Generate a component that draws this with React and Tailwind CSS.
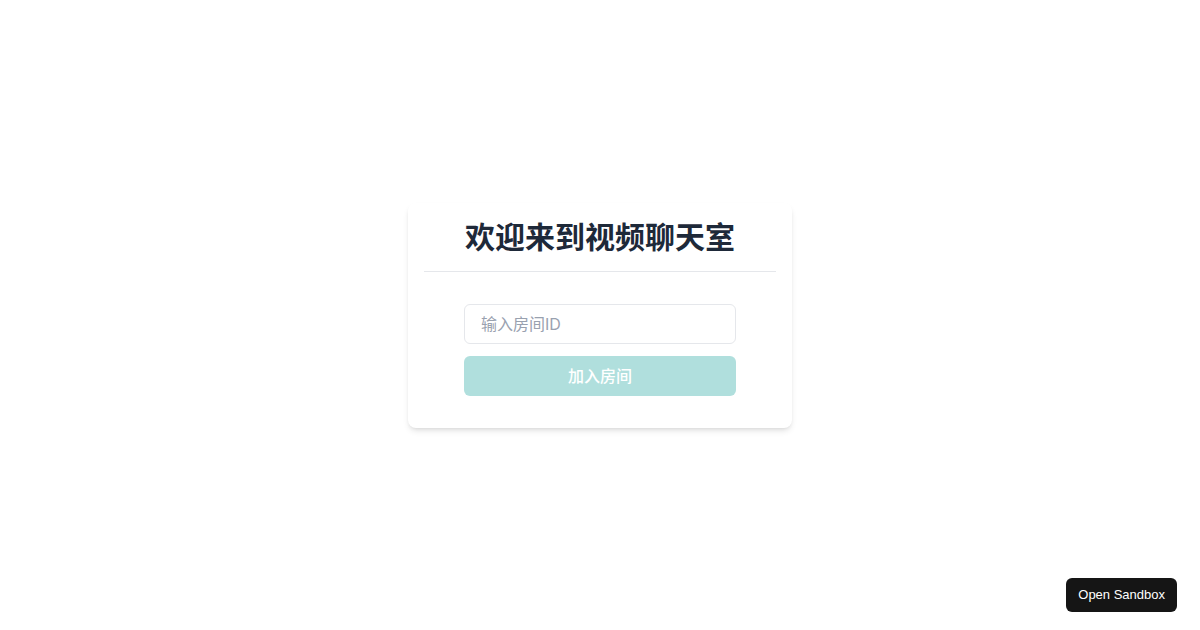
import { useState } from "react";

export default function App() {
  const [roomId, setRoomId] = useState("");

  return (
    <div className="min-h-screen bg-white flex items-center justify-center font-['Inter','Noto_Sans_CJK_SC',sans-serif]">
      <div className="w-full max-w-sm bg-white rounded-lg shadow-md px-4 pt-4">
        <h1 className="text-3xl font-bold text-gray-800 text-center pb-4 border-b border-gray-200">
          欢迎来到视频聊天室
        </h1>

        <div className="px-10 py-8 flex flex-col gap-3">
          <input
            type="text"
            value={roomId}
            onChange={(e) => setRoomId(e.target.value)}
            placeholder="输入房间ID"
            className="h-10 w-full border border-gray-200 rounded-md px-4 text-base text-gray-800 placeholder:text-gray-400 outline-none"
          />
          <button
            disabled={!roomId}
            className="h-10 w-full rounded-md bg-[#b0dfdd] text-white text-base font-medium"
          >
            加入房间
          </button>
        </div>
      </div>

      <button className="fixed right-[23px] bottom-[18px] h-[34px] px-3 rounded-md bg-[#151515] text-white text-[13px] font-['Liberation_Sans',Arial,sans-serif]">
        Open Sandbox
      </button>
    </div>
  );
}
